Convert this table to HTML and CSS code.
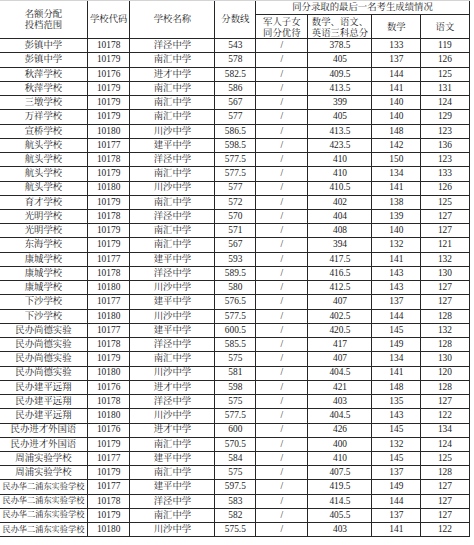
FILE: index.html
```html
<!DOCTYPE html>
<html lang="zh-CN">
<head>
<meta charset="utf-8">
<title>名额分配投档</title>
<link rel="stylesheet" href="styles.css">
</head>
<body>
<div class="sheet">
  <div class="cell head span-rows">名额分配<br>投档范围</div>
  <div class="cell head span-rows">学校代码</div>
  <div class="cell head span-rows">学校名称</div>
  <div class="cell head span-rows">分数线</div>
  <div class="cell head span-cols">同分录取的最后一名考生成绩情况</div>
  <div class="cell head sub">军人子女<br>同分优待</div>
  <div class="cell head sub">数学、语文、<br>英语三科总分</div>
  <div class="cell head sub">数学</div>
  <div class="cell head sub">语文</div>

  <div class="row"><div class="cell">彭镇中学</div><div class="cell">10178</div><div class="cell">洋泾中学</div><div class="cell">543</div><div class="cell">/</div><div class="cell">378.5</div><div class="cell">133</div><div class="cell">119</div></div>
  <div class="row"><div class="cell">彭镇中学</div><div class="cell">10179</div><div class="cell">南汇中学</div><div class="cell">578</div><div class="cell">/</div><div class="cell">405</div><div class="cell">137</div><div class="cell">126</div></div>
  <div class="row"><div class="cell">秋萍学校</div><div class="cell">10176</div><div class="cell">进才中学</div><div class="cell">582.5</div><div class="cell">/</div><div class="cell">409.5</div><div class="cell">144</div><div class="cell">125</div></div>
  <div class="row"><div class="cell">秋萍学校</div><div class="cell">10179</div><div class="cell">南汇中学</div><div class="cell">586</div><div class="cell">/</div><div class="cell">413.5</div><div class="cell">141</div><div class="cell">131</div></div>
  <div class="row"><div class="cell">三墩学校</div><div class="cell">10179</div><div class="cell">南汇中学</div><div class="cell">567</div><div class="cell">/</div><div class="cell">399</div><div class="cell">140</div><div class="cell">124</div></div>
  <div class="row"><div class="cell">万祥学校</div><div class="cell">10179</div><div class="cell">南汇中学</div><div class="cell">577</div><div class="cell">/</div><div class="cell">405</div><div class="cell">140</div><div class="cell">129</div></div>
  <div class="row"><div class="cell">宣桥学校</div><div class="cell">10180</div><div class="cell">川沙中学</div><div class="cell">586.5</div><div class="cell">/</div><div class="cell">413.5</div><div class="cell">148</div><div class="cell">123</div></div>
  <div class="row"><div class="cell">航头学校</div><div class="cell">10177</div><div class="cell">建平中学</div><div class="cell">598.5</div><div class="cell">/</div><div class="cell">423.5</div><div class="cell">142</div><div class="cell">136</div></div>
  <div class="row"><div class="cell">航头学校</div><div class="cell">10178</div><div class="cell">洋泾中学</div><div class="cell">577.5</div><div class="cell">/</div><div class="cell">410</div><div class="cell">150</div><div class="cell">123</div></div>
  <div class="row"><div class="cell">航头学校</div><div class="cell">10179</div><div class="cell">南汇中学</div><div class="cell">577.5</div><div class="cell">/</div><div class="cell">410</div><div class="cell">134</div><div class="cell">133</div></div>
  <div class="row"><div class="cell">航头学校</div><div class="cell">10180</div><div class="cell">川沙中学</div><div class="cell">577</div><div class="cell">/</div><div class="cell">410.5</div><div class="cell">141</div><div class="cell">126</div></div>
  <div class="row"><div class="cell">育才学校</div><div class="cell">10179</div><div class="cell">南汇中学</div><div class="cell">572</div><div class="cell">/</div><div class="cell">402</div><div class="cell">138</div><div class="cell">125</div></div>
  <div class="row"><div class="cell">光明学校</div><div class="cell">10178</div><div class="cell">洋泾中学</div><div class="cell">570</div><div class="cell">/</div><div class="cell">404</div><div class="cell">139</div><div class="cell">127</div></div>
  <div class="row"><div class="cell">光明学校</div><div class="cell">10179</div><div class="cell">南汇中学</div><div class="cell">571</div><div class="cell">/</div><div class="cell">408</div><div class="cell">140</div><div class="cell">127</div></div>
  <div class="row"><div class="cell">东海学校</div><div class="cell">10179</div><div class="cell">南汇中学</div><div class="cell">567</div><div class="cell">/</div><div class="cell">394</div><div class="cell">132</div><div class="cell">121</div></div>
  <div class="row"><div class="cell">康城学校</div><div class="cell">10177</div><div class="cell">建平中学</div><div class="cell">593</div><div class="cell">/</div><div class="cell">417.5</div><div class="cell">141</div><div class="cell">132</div></div>
  <div class="row"><div class="cell">康城学校</div><div class="cell">10178</div><div class="cell">洋泾中学</div><div class="cell">589.5</div><div class="cell">/</div><div class="cell">416.5</div><div class="cell">143</div><div class="cell">130</div></div>
  <div class="row"><div class="cell">康城学校</div><div class="cell">10180</div><div class="cell">川沙中学</div><div class="cell">580</div><div class="cell">/</div><div class="cell">412.5</div><div class="cell">143</div><div class="cell">127</div></div>
  <div class="row"><div class="cell">下沙学校</div><div class="cell">10177</div><div class="cell">建平中学</div><div class="cell">576.5</div><div class="cell">/</div><div class="cell">407</div><div class="cell">137</div><div class="cell">127</div></div>
  <div class="row"><div class="cell">下沙学校</div><div class="cell">10180</div><div class="cell">川沙中学</div><div class="cell">577.5</div><div class="cell">/</div><div class="cell">402.5</div><div class="cell">144</div><div class="cell">128</div></div>
  <div class="row"><div class="cell">民办尚德实验</div><div class="cell">10177</div><div class="cell">建平中学</div><div class="cell">600.5</div><div class="cell">/</div><div class="cell">420.5</div><div class="cell">145</div><div class="cell">132</div></div>
  <div class="row"><div class="cell">民办尚德实验</div><div class="cell">10178</div><div class="cell">洋泾中学</div><div class="cell">585.5</div><div class="cell">/</div><div class="cell">417</div><div class="cell">149</div><div class="cell">128</div></div>
  <div class="row"><div class="cell">民办尚德实验</div><div class="cell">10179</div><div class="cell">南汇中学</div><div class="cell">575</div><div class="cell">/</div><div class="cell">407</div><div class="cell">134</div><div class="cell">130</div></div>
  <div class="row"><div class="cell">民办尚德实验</div><div class="cell">10180</div><div class="cell">川沙中学</div><div class="cell">581</div><div class="cell">/</div><div class="cell">404.5</div><div class="cell">141</div><div class="cell">120</div></div>
  <div class="row"><div class="cell">民办建平远翔</div><div class="cell">10176</div><div class="cell">进才中学</div><div class="cell">598</div><div class="cell">/</div><div class="cell">421</div><div class="cell">148</div><div class="cell">128</div></div>
  <div class="row"><div class="cell">民办建平远翔</div><div class="cell">10178</div><div class="cell">洋泾中学</div><div class="cell">575</div><div class="cell">/</div><div class="cell">403</div><div class="cell">135</div><div class="cell">127</div></div>
  <div class="row"><div class="cell">民办建平远翔</div><div class="cell">10180</div><div class="cell">川沙中学</div><div class="cell">577.5</div><div class="cell">/</div><div class="cell">404.5</div><div class="cell">143</div><div class="cell">122</div></div>
  <div class="row"><div class="cell">民办进才外国语</div><div class="cell">10176</div><div class="cell">进才中学</div><div class="cell">600</div><div class="cell">/</div><div class="cell">426</div><div class="cell">145</div><div class="cell">134</div></div>
  <div class="row"><div class="cell">民办进才外国语</div><div class="cell">10179</div><div class="cell">南汇中学</div><div class="cell">570.5</div><div class="cell">/</div><div class="cell">400</div><div class="cell">132</div><div class="cell">124</div></div>
  <div class="row"><div class="cell">周浦实验学校</div><div class="cell">10177</div><div class="cell">建平中学</div><div class="cell">584</div><div class="cell">/</div><div class="cell">410</div><div class="cell">145</div><div class="cell">125</div></div>
  <div class="row"><div class="cell">周浦实验学校</div><div class="cell">10179</div><div class="cell">南汇中学</div><div class="cell">575</div><div class="cell">/</div><div class="cell">407.5</div><div class="cell">137</div><div class="cell">128</div></div>
  <div class="row"><div class="cell small">民办华二浦东实验学校</div><div class="cell">10177</div><div class="cell">建平中学</div><div class="cell">597.5</div><div class="cell">/</div><div class="cell">419.5</div><div class="cell">149</div><div class="cell">127</div></div>
  <div class="row"><div class="cell small">民办华二浦东实验学校</div><div class="cell">10178</div><div class="cell">洋泾中学</div><div class="cell">583</div><div class="cell">/</div><div class="cell">414.5</div><div class="cell">144</div><div class="cell">127</div></div>
  <div class="row"><div class="cell small">民办华二浦东实验学校</div><div class="cell">10179</div><div class="cell">南汇中学</div><div class="cell">582</div><div class="cell">/</div><div class="cell">405.5</div><div class="cell">137</div><div class="cell">127</div></div>
  <div class="row"><div class="cell small">民办华二浦东实验学校</div><div class="cell">10180</div><div class="cell">川沙中学</div><div class="cell">575.5</div><div class="cell">/</div><div class="cell">403</div><div class="cell">141</div><div class="cell">122</div></div>
</div>
</body>
</html>
```

FILE: styles.css
```css
html, body {
  margin: 0;
  padding: 0;
  background: #ffffff;
}

.sheet {
  display: grid;
  width: 469.8px;
  grid-template-columns: 87.8px 42.7px 85px 40.7px 52.3px 64px 48.7px 48.6px;
  grid-template-rows: 13.8px 24.4px repeat(35, 14.237px);
  font-family: "Liberation Serif", "Noto Serif CJK SC", "Noto Sans CJK SC", serif;
  font-size: 9.4px;
  color: #1c1c1c;
  border-top: 1px solid #d4d4d4;
}

.row {
  display: contents;
}

.cell {
  box-sizing: border-box;
  display: flex;
  align-items: center;
  justify-content: center;
  text-align: center;
  line-height: 1;
  white-space: nowrap;
  border-right: 1px solid #262626;
  border-bottom: 1px solid #262626;
  overflow: hidden;
}

.head {
  line-height: 11px;
}

.span-rows {
  grid-row: 1 / 3;
}

.span-cols {
  grid-column: 5 / 9;
}

.sub {
  grid-row: 2;
  padding-top: 2px;
}

.small {
  font-size: 8.2px;
}
```
